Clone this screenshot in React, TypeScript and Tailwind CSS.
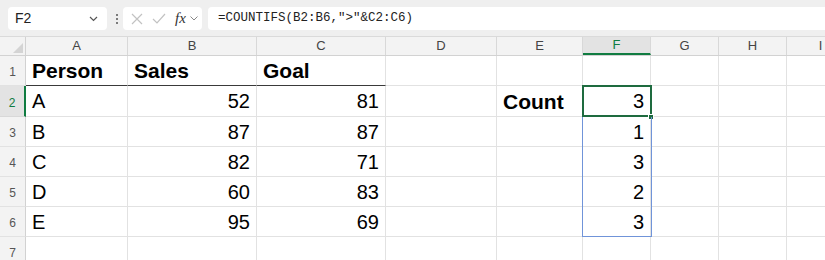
import React from "react";

const cols = ["A", "B", "C", "D", "E", "F", "G", "H", "I"];
const widths = ["w-[102px]", "w-[129px]", "w-[129px]", "w-[111px]", "w-[86px]", "w-[68px]", "w-[68px]", "w-[68px]", "w-[68px]"];
const heights = ["h-[30px]", "h-[31px]", "h-[30px]", "h-[30px]", "h-[30px]", "h-[30px]", "h-[30px]"];

type Cell = { v: string; bold?: boolean; right?: boolean };

const data: Record<string, Cell> = {
  A1: { v: "Person", bold: true },
  B1: { v: "Sales", bold: true },
  C1: { v: "Goal", bold: true },
  A2: { v: "A" },
  B2: { v: "52", right: true },
  C2: { v: "81", right: true },
  A3: { v: "B" },
  B3: { v: "87", right: true },
  C3: { v: "87", right: true },
  A4: { v: "C" },
  B4: { v: "82", right: true },
  C4: { v: "71", right: true },
  A5: { v: "D" },
  B5: { v: "60", right: true },
  C5: { v: "83", right: true },
  A6: { v: "E" },
  B6: { v: "95", right: true },
  C6: { v: "69", right: true },
  E2: { v: "Count", bold: true },
  F2: { v: "3", right: true },
  F3: { v: "1", right: true },
  F4: { v: "3", right: true },
  F5: { v: "2", right: true },
  F6: { v: "3", right: true },
};

function Toolbar() {
  return (
    <div className="flex h-[37px] items-start border-b border-[#dadada] bg-[#efefef] pt-[7px]">
      <div className="ml-[8px] flex h-[23px] w-[99px] items-center justify-between rounded-[4px] bg-white pl-[7px] pr-[9px] text-[14px] text-[#222]">
        <span>F2</span>
        <svg width="9" height="6" viewBox="0 0 9 6" fill="none" stroke="#555" strokeWidth="1.2">
          <path d="M1 1l3.5 3.5L8 1" />
        </svg>
      </div>
      <div className="ml-[5px] flex h-[23px] w-[10px] flex-col items-center justify-center gap-[2px]">
        <span className="h-[2px] w-[2px] rounded-full bg-[#555]" />
        <span className="h-[2px] w-[2px] rounded-full bg-[#555]" />
        <span className="h-[2px] w-[2px] rounded-full bg-[#555]" />
      </div>
      <div className="ml-[1px] flex h-[23px] w-[79px] items-center rounded-[4px] bg-white pl-[8px]">
        <svg width="12" height="12" viewBox="0 0 12 12" stroke="#c2c2c2" strokeWidth="1.2">
          <path d="M1 1l10 10M11 1L1 11" />
        </svg>
        <svg className="ml-[9px]" width="14" height="11" viewBox="0 0 14 11" fill="none" stroke="#c2c2c2" strokeWidth="1.2">
          <path d="M1 6l4 4 8-9" />
        </svg>
        <span className="ml-[9px] font-['Liberation_Serif',serif] text-[15px] italic leading-none text-[#333]">fx</span>
        <svg className="ml-[4px]" width="8" height="5" viewBox="0 0 8 5" fill="none" stroke="#888" strokeWidth="1">
          <path d="M0.5 0.5l3.5 3.5 3.5-3.5" />
        </svg>
      </div>
      <div className="ml-[6px] flex h-[23px] flex-1 items-center rounded-l-[4px] bg-white pl-[10px] font-['Liberation_Mono',monospace] text-[12.5px] text-[#222]">
        =COUNTIFS(B2:B6,"&gt;"&amp;C2:C6)
      </div>
    </div>
  );
}

function HeaderRow() {
  return (
    <div className="flex h-[19px] border-b border-[#d2d2d2] bg-[#f3f3f3] text-[13px] text-[#444]">
      <div className="relative w-[26px] shrink-0 border-r border-[#d2d2d2]">
        <div className="absolute bottom-[2px] right-[2px] h-0 w-0 border-b-[10px] border-l-[10px] border-b-[#d4d4d4] border-l-transparent" />
      </div>
      {cols.map((c, i) => (
        <div
          key={c}
          className={`${widths[i]} flex shrink-0 items-center justify-center border-r border-[#d8d8d8] ${
            c === "F" ? "border-b-2 border-b-[#107c41] bg-[#e3e3e3] text-[#107c41]" : ""
          }`}
        >
          {c}
        </div>
      ))}
      <div className="flex-1" />
    </div>
  );
}

function Row({ r }: { r: number }) {
  const active = r === 2;
  return (
    <div className={`flex ${heights[r - 1]}`}>
      <div
        className={`flex w-[26px] shrink-0 items-end justify-center border-b border-r pb-[4px] text-[12px] ${
          active
            ? "border-b-[#d8d8d8] border-r-2 border-r-[#107c41] bg-[#e3e3e3] text-[#107c41]"
            : "border-b-[#e2e2e2] border-r-[#d2d2d2] bg-[#f3f3f3] text-[#555]"
        }`}
      >
        {r}
      </div>
      {cols.map((c, i) => {
        const cell = data[c + r];
        const dark = r === 1 && i < 3;
        return (
          <div
            key={c}
            className={`${widths[i]} flex shrink-0 items-center border-r border-b border-r-[#e2e2e2] px-[6px] text-[20px] leading-none text-black ${
              dark ? "border-b-[#3a3a3a]" : "border-b-[#e2e2e2]"
            } ${cell?.right ? "justify-end" : ""} ${cell?.bold ? "text-[21px] font-bold" : ""}`}
          >
            {cell?.v}
          </div>
        );
      })}
      <div className="flex-1 border-b border-[#e2e2e2]" />
    </div>
  );
}

export default function App() {
  return (
    <div className="h-[260px] w-[825px] overflow-hidden bg-white font-['Liberation_Sans',Arial,sans-serif]">
      <Toolbar />
      <HeaderRow />
      <div className="relative">
        {[1, 2, 3, 4, 5, 6, 7].map((r) => (
          <Row key={r} r={r} />
        ))}
        {/* selection of F2 */}
        <div className="absolute left-[582px] top-[29px] h-[32px] w-[70px] border-2 border-[#1e6b3f]" />
        <div className="absolute left-[648px] top-[58px] h-[6px] w-[6px] border border-white bg-[#1e6b3f]" />
        {/* referenced range F3:F6 */}
        <div className="absolute left-[582px] top-[61px] h-[120px] w-[70px] border border-t-0 border-[#7094d9]" />
      </div>
    </div>
  );
}
